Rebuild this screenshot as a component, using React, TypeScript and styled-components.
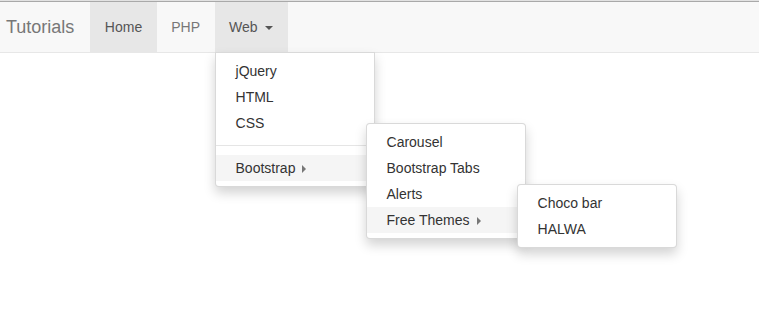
import React from "react";
import styled, { createGlobalStyle } from "styled-components";

const GlobalStyle = createGlobalStyle`
  html, body {
    margin: 0;
    background: #fff;
  }
  body {
    font-family: "Liberation Sans", Arial, sans-serif;
    font-size: 14px;
    line-height: 1.42857;
    color: #333;
    border-top: 1px solid #e2e2e2;
  }
  #root {
    min-height: 312px;
  }
`;

const Navbar = styled.nav`
  position: relative;
  z-index: 100;
  display: flex;
  height: 50px;
  background: #f8f8f8;
  border-top: 1px solid #a9a9a9;
  border-bottom: 1px solid #e7e7e7;
`;

const Brand = styled.a`
  display: block;
  padding: 15px 16px 15px 6px;
  font-size: 18px;
  line-height: 20px;
  color: #777;
  text-decoration: none;
`;

const NavList = styled.ul`
  display: flex;
  margin: 0;
  padding: 0;
  list-style: none;
`;

const NavItem = styled.li<{ $active?: boolean }>`
  position: relative;
  display: block;
  padding: 15px 14.5px;
  line-height: 20px;
  color: ${(p) => (p.$active ? "#555" : "#777")};
  background: ${(p) => (p.$active ? "#e7e7e7" : "transparent")};
`;

const CaretDown = styled.span`
  display: inline-block;
  width: 0;
  height: 0;
  margin: 0 1px 0 7px;
  vertical-align: middle;
  border-top: 4px solid #555;
  border-left: 4px solid transparent;
  border-right: 4px solid transparent;
`;

const CaretRight = styled.span`
  display: inline-block;
  width: 0;
  height: 0;
  margin-left: 7px;
  vertical-align: middle;
  border-left: 4px solid #777;
  border-top: 4px solid transparent;
  border-bottom: 4px solid transparent;
`;

const Menu = styled.ul<{ $top: string; $left: string; $flatTop?: boolean }>`
  position: absolute;
  top: ${(p) => p.$top};
  left: ${(p) => p.$left};
  z-index: 1000;
  display: block;
  box-sizing: border-box;
  width: 160px;
  margin: 0;
  padding: 5px 0;
  list-style: none;
  background: #fff;
  border: 1px solid rgba(0, 0, 0, 0.15);
  border-radius: ${(p) => (p.$flatTop ? "0 0 4px 4px" : "4px")};
  box-shadow: 0 6px 12px rgba(0, 0, 0, 0.175);
`;

const MenuItem = styled.li<{ $open?: boolean }>`
  position: relative;
  display: block;
  padding: 3px 20px;
  line-height: 20px;
  color: #333;
  white-space: nowrap;
  background: ${(p) => (p.$open ? "#f5f5f5" : "transparent")};
`;

const Divider = styled.li`
  height: 1px;
  margin: 9px 0;
  background: #e5e5e5;
`;

export default function App() {
  return (
    <>
      <GlobalStyle />
      <Navbar>
        <Brand href="#">Tutorials</Brand>
        <NavList>
          <NavItem $active>Home</NavItem>
          <NavItem>PHP</NavItem>
          <NavItem $active>
            Web
            <CaretDown />
            <Menu $top="50px" $left="0px" $flatTop>
              <MenuItem>jQuery</MenuItem>
              <MenuItem>HTML</MenuItem>
              <MenuItem>CSS</MenuItem>
              <Divider />
              <MenuItem $open>
                Bootstrap
                <CaretRight />
                <Menu $top="-32px" $left="150px">
                  <MenuItem>Carousel</MenuItem>
                  <MenuItem>Bootstrap Tabs</MenuItem>
                  <MenuItem>Alerts</MenuItem>
                  <MenuItem $open>
                    Free Themes
                    <CaretRight />
                    <Menu $top="-23px" $left="150px">
                      <MenuItem>Choco bar</MenuItem>
                      <MenuItem>HALWA</MenuItem>
                    </Menu>
                  </MenuItem>
                </Menu>
              </MenuItem>
            </Menu>
          </NavItem>
        </NavList>
      </Navbar>
    </>
  );
}
